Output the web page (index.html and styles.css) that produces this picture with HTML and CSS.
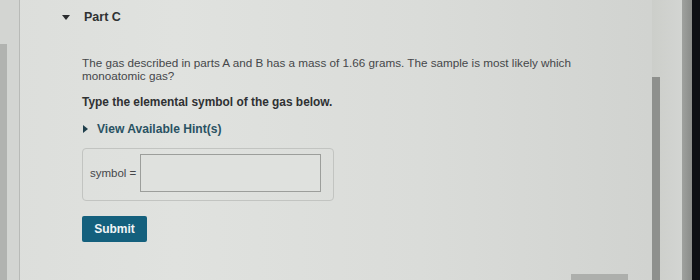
FILE: index.html
```html
<!DOCTYPE html>
<html>
<head>
<meta charset="utf-8">
<link rel="stylesheet" href="styles.css">
</head>
<body>
<div class="screen">
  <div class="left-rail">
    <div class="left-block"></div>
  </div>
  <main class="main">
    <div class="part-head">
      <span class="caret-down"></span>
      <h2 class="part-title">Part C</h2>
    </div>
    <div class="content">
      <p class="question">The gas described in parts A and B has a mass of 1.66 grams. The sample is most likely which monoatomic gas?</p>
      <p class="instruction">Type the elemental symbol of the gas below.</p>
      <div class="hint"><span class="caret-right"></span><span class="hint-text">View Available Hint(s)</span></div>
      <div class="answer-box">
        <label class="answer-label">symbol =</label>
        <div class="answer-input"></div>
      </div>
      <button class="submit">Submit</button>
      <div class="next-stub"></div>
    </div>
  </main>
  <div class="scroll-col">
    <div class="scroll-thumb"></div>
  </div>
  <div class="edge-gray"></div>
  <div class="edge-dark"></div>
</div>
</body>
</html>
```
FILE: styles.css
```css
html, body {
  margin: 0;
  padding: 0;
}
body {
  width: 700px;
  height: 280px;
  overflow: hidden;
  font-family: "Liberation Sans", Arial, sans-serif;
  background: #d8dad7;
}
.screen {
  display: flex;
  height: 280px;
  background: linear-gradient(to right, #dcdedb 0%, #e0e2df 25%, #dadcd9 60%, #cfd1ce 100%);
}
.left-rail {
  width: 20px;
  border-right: 1px solid #b8bab7;
  background: #d3d5d2;
  display: flex;
  flex-direction: column;
  padding-top: 44px;
  box-sizing: border-box;
}
.left-block {
  width: 7px;
  flex: 1;
  background: #b1b3b0;
}
.main {
  flex: 1;
  display: flex;
  flex-direction: column;
  color: #3b3d3f;
}
.part-head {
  display: flex;
  align-items: center;
  gap: 14px;
  padding-left: 42px;
  padding-top: 10px;
  height: 14px;
}
.caret-down {
  width: 0;
  height: 0;
  border-left: 4px solid transparent;
  border-right: 4px solid transparent;
  border-top: 5px solid #2a2c2e;
}
.part-title {
  margin: 0;
  font-size: 12.5px;
  font-weight: bold;
  color: #2f3133;
}
.content {
  padding-left: 62px;
  padding-top: 32px;
  display: flex;
  flex-direction: column;
  align-items: flex-start;
}
.question {
  margin: 0;
  font-size: 11.7px;
  line-height: 13px;
  width: 505px;
  color: #45474a;
}
.instruction {
  margin: 14px 0 0 0;
  font-size: 11.9px;
  line-height: 13px;
  font-weight: bold;
  color: #2f3133;
}
.hint {
  margin-top: 13px;
  display: flex;
  align-items: center;
  gap: 9px;
  height: 14px;
  padding-left: 1px;
}
.caret-right {
  width: 0;
  height: 0;
  border-top: 4px solid transparent;
  border-bottom: 4px solid transparent;
  border-left: 5px solid #1f3f4c;
}
.hint-text {
  font-size: 12.1px;
  font-weight: bold;
  color: #2a5263;
}
.answer-box {
  margin-top: 12px;
  width: 252px;
  height: 53px;
  box-sizing: border-box;
  border: 1px solid #c2c4c1;
  border-radius: 4px;
  display: flex;
  align-items: center;
  padding-left: 7px;
  gap: 4px;
}
.answer-label {
  font-size: 11.5px;
  color: #45474a;
  margin-top: -3px;
}
.answer-input {
  width: 181px;
  height: 38px;
  box-sizing: border-box;
  border: 1px solid #9c9e9b;
  background: #dfe1de;
  margin-top: -3px;
}
.submit {
  margin-top: 15px;
  width: 65px;
  height: 26px;
  border: none;
  border-radius: 2px;
  background: #14607d;
  color: #f2f5f6;
  font-family: "Liberation Sans", Arial, sans-serif;
  font-size: 12px;
  font-weight: bold;
  padding: 0;
}
.next-stub {
  margin-top: 32px;
  margin-left: 489px;
  width: 57px;
  height: 8px;
  background: #adafac;
}
.scroll-col {
  width: 30px;
  display: flex;
  flex-direction: column;
  align-items: flex-start;
  padding-top: 77px;
  box-sizing: border-box;
  background: linear-gradient(to right, #ccceca, #d3d5d2);
}
.scroll-thumb {
  width: 8px;
  flex: 1;
  background: #8e908d;
}
.edge-gray {
  width: 10px;
  background: linear-gradient(to right, #9fa19e, #8a8c89);
}
.edge-dark {
  width: 8px;
  background: #0e1014;
}
```
